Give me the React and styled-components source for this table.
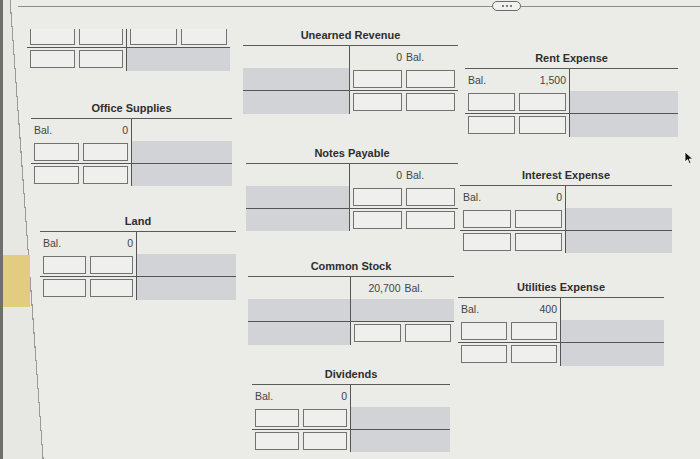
import styled, { createGlobalStyle } from "styled-components";

const GlobalStyle = createGlobalStyle`
  html, body { margin: 0; padding: 0; }
  body {
    font-family: "Liberation Sans", Arial, sans-serif;
    background: #eaeae7;
    overflow: hidden;
  }
`;

const Page = styled.div`
  position: relative;
  width: 700px;
  height: 459px;
  overflow: hidden;
  background:
    linear-gradient(to right, #6e6e6c 0 3px, transparent 3px),
    linear-gradient(#e1cc80, #e1cc80) 0 255px / 30px 52px no-repeat,
    linear-gradient(85.89deg, #e7e7e3 0 42.4px, #9a9a97 42.4px 43.5px, #ebebe8 43.5px);
`;

const TopBar = styled.div`
  display: flex;
  align-items: center;
  height: 12px;
  margin-left: 18px;
`;

const Rule = styled.div`
  height: 1px;
  background: #8c8c8a;
  width: ${(p) => (p.$w ? `${p.$w}px` : "auto")};
  flex: ${(p) => (p.$w ? "none" : 1)};
`;

const MorePill = styled.div`
  display: flex;
  align-items: center;
  justify-content: center;
  gap: 2px;
  width: 27px;
  height: 8px;
  border: 1px solid #6a6a6a;
  border-radius: 5px;
  background: #f1f1ef;
`;

const Dot = styled.span`
  width: 2px;
  height: 2px;
  border-radius: 50%;
  background: #555;
`;

const Board = styled.div`
  display: flex;
  padding-left: 27px;
`;

const Column = styled.div`
  display: flex;
  flex-direction: column;
  width: ${(p) => p.$w}px;
  padding-top: ${(p) => p.$top}px;
`;

const Account = styled.div`
  width: ${(p) => p.$w}px;
  margin-left: ${(p) => p.$indent}px;
  margin-top: ${(p) => p.$gap}px;
`;

const Title = styled.div`
  text-align: center;
  font-weight: bold;
  font-size: 11px;
  line-height: 14px;
  color: #2e2e2e;
  padding-bottom: 3px;
  border-bottom: 1.5px solid #5a5a5a;
`;

const Grid = styled.div`
  display: grid;
  grid-template-columns: ${(p) => p.$split}px 1fr;
`;

const Side = styled.div`
  display: flex;
  flex-direction: column;
  border-right: ${(p) => (p.$left ? "1.5px solid #555" : "none")};
`;

const Head = styled.div`
  display: grid;
  grid-template-columns: 1fr 1fr;
  column-gap: 4px;
  align-items: center;
  height: 22px;
  padding: 0 3px;
  font-size: 10.5px;
  color: #444;
`;

const Label = styled.span`
  text-align: ${(p) => p.$align};
  white-space: nowrap;
`;

const Row = styled.div`
  display: flex;
  align-items: ${(p) => (p.$clip ? "flex-end" : "center")};
  gap: 4px;
  padding: ${(p) => (p.$clip ? "0 3px 2px" : "0 3px")};
  box-sizing: border-box;
  background: ${(p) => (p.$gray ? "#d1d3d6" : "transparent")};
  border-top: ${(p) => (p.$ruled ? "1.5px solid #555" : "none")};
  height: ${(p) => (p.$clip ? 18 : p.$ruled ? 23.5 : 22)}px;
`;

const Box = styled.div`
  flex: 1;
  height: ${(p) => (p.$clip ? 16 : 18)}px;
  box-sizing: border-box;
  border: 1.5px solid #727272;
  border-top: ${(p) => (p.$clip ? "none" : "1.5px solid #727272")};
  background: #efefed;
`;

const Cursor = styled.svg`
  position: absolute;
  left: 684px;
  top: 151px;
`;

const columns = [
  {
    w: 216,
    top: 17,
    accounts: [
      { id: "top", w: 203, split: 100, indent: 0, gap: 0, clipped: true, left: ["inputs", "inputs"], right: ["inputs", "gray"] },
      { id: "os", title: "Office Supplies", w: 201, split: 101, indent: 4, gap: 30, head: { side: "left", value: "0" }, left: ["inputs", "inputs"], right: ["gray", "gray"] },
      { id: "land", title: "Land", w: 196, split: 97, indent: 13, gap: 28, head: { side: "left", value: "0" }, left: ["inputs", "inputs"], right: ["gray", "gray"] },
    ],
  },
  {
    w: 215,
    top: 16,
    accounts: [
      { id: "ur", title: "Unearned Revenue", w: 215, split: 107, indent: 0, gap: 0, head: { side: "right", value: "0" }, left: ["gray", "gray"], right: ["inputs", "inputs"] },
      { id: "np", title: "Notes Payable", w: 212, split: 104, indent: 3, gap: 32, head: { side: "right", value: "0" }, left: ["gray", "gray"], right: ["inputs", "inputs"] },
      { id: "cs", title: "Common Stock", w: 206, split: 103, indent: 5, gap: 28, head: { side: "right", value: "20,700" }, left: ["gray", "gray"], right: ["gray", "inputs"] },
      { id: "div", title: "Dividends", w: 198, split: 99, indent: 9, gap: 22, head: { side: "left", value: "0" }, left: ["inputs", "inputs"], right: ["gray", "gray"] },
    ],
  },
  {
    w: 230,
    top: 39,
    accounts: [
      { id: "rent", title: "Rent Expense", w: 213, split: 105, indent: 7, gap: 0, head: { side: "left", value: "1,500" }, left: ["inputs", "inputs"], right: ["gray", "gray"] },
      { id: "int", title: "Interest Expense", w: 212, split: 106, indent: 2, gap: 31, head: { side: "left", value: "0" }, left: ["inputs", "inputs"], right: ["gray", "gray"] },
      { id: "util", title: "Utilities Expense", w: 206, split: 103, indent: 0, gap: 27, head: { side: "left", value: "400" }, left: ["inputs", "inputs"], right: ["gray", "gray"] },
    ],
  },
];

function Cell({ kind, ruled, clip }) {
  if (kind === "gray") return <Row $gray $ruled={ruled} $clip={clip} />;
  return (
    <Row $ruled={ruled} $clip={clip}>
      <Box $clip={clip} />
      <Box $clip={clip} />
    </Row>
  );
}

function AccountSide({ account, side }) {
  const rows = account[side];
  const head = account.head;
  return (
    <Side $left={side === "left"}>
      {!account.clipped && (
        <Head>
          {head.side === side && side === "left" && (
            <>
              <Label $align="left">Bal.</Label>
              <Label $align="right">{head.value}</Label>
            </>
          )}
          {head.side === side && side === "right" && (
            <>
              <Label $align="right">{head.value}</Label>
              <Label $align="left">Bal.</Label>
            </>
          )}
        </Head>
      )}
      <Cell kind={rows[0]} clip={account.clipped} />
      <Cell kind={rows[1]} ruled />
    </Side>
  );
}

function TAccount({ account }) {
  return (
    <Account $w={account.w} $indent={account.indent} $gap={account.gap}>
      {account.title && <Title>{account.title}</Title>}
      <Grid $split={account.split}>
        <AccountSide account={account} side="left" />
        <AccountSide account={account} side="right" />
      </Grid>
    </Account>
  );
}

export default function App() {
  return (
    <Page>
      <GlobalStyle />
      <TopBar>
        <Rule $w={474} />
        <MorePill>
          <Dot />
          <Dot />
          <Dot />
        </MorePill>
        <Rule />
      </TopBar>
      <Board>
        {columns.map((col, i) => (
          <Column key={i} $w={col.w} $top={col.top}>
            {col.accounts.map((a) => (
              <TAccount key={a.id} account={a} />
            ))}
          </Column>
        ))}
      </Board>
      <Cursor width="10" height="14" viewBox="0 0 10 14">
        <path d="M1 1 L1 11 L3.6 8.6 L5.4 12.8 L7 12.1 L5.3 8 L8.8 8 Z" fill="#111" stroke="#fff" strokeWidth="0.8" />
      </Cursor>
    </Page>
  );
}
